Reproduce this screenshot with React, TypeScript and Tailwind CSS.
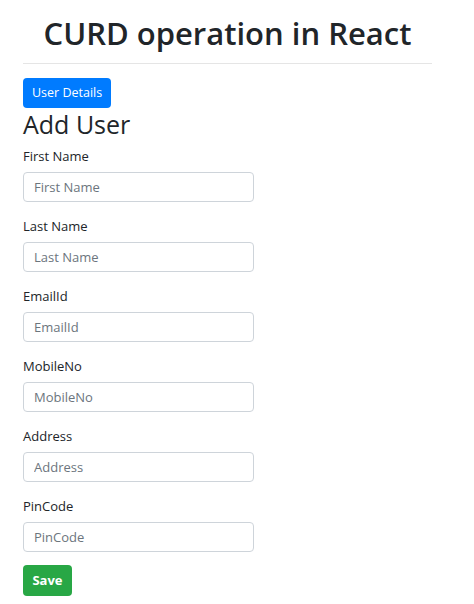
import React, { useState } from 'react';

const fields = [
  { key: 'firstName', label: 'First Name' },
  { key: 'lastName', label: 'Last Name' },
  { key: 'emailId', label: 'EmailId' },
  { key: 'mobileNo', label: 'MobileNo' },
  { key: 'address', label: 'Address' },
  { key: 'pinCode', label: 'PinCode' },
];

export default function App() {
  const [values, setValues] = useState<Record<string, string>>({});

  return (
    <div className="min-h-[604px] bg-white text-[#212529] font-['Open_Sans',sans-serif]">
      <div className="w-[409px] ml-[23px]">
        {/* Header */}
        <h1 className="pt-[15px] text-center text-[31px] leading-[36px] font-semibold">
          CURD operation in React
        </h1>
        <hr className="mt-[12px] border-t border-black/10" />

        <button className="mt-[14px] h-[30px] px-[9px] rounded bg-[#007bff] text-white text-[12.5px]">
          User Details
        </button>

        <h2 className="mt-[1px] text-[25px] leading-[30px] font-medium">Add User</h2>

        {/* Form */}
        <form className="flex flex-col" onSubmit={(e) => e.preventDefault()}>
          {fields.map((f, i) => (
            <div key={f.key} className={i === 0 ? 'mt-[7px]' : 'mt-[14px]'}>
              <label className="block text-[13px] leading-[20px]">{f.label}</label>
              <input
                value={values[f.key] || ''}
                onChange={(e) => setValues({ ...values, [f.key]: e.target.value })}
                placeholder={f.label}
                className="mt-[6px] block w-[231px] h-[30px] px-[10px] border border-[#ced4da] rounded text-[13px] placeholder-[#6c757d] focus:outline-none"
              />
            </div>
          ))}
          <button
            type="submit"
            className="mt-[13px] w-[49px] h-[31px] rounded bg-[#28a745] text-white text-[13px] font-bold"
          >
            Save
          </button>
        </form>
      </div>
    </div>
  );
}
